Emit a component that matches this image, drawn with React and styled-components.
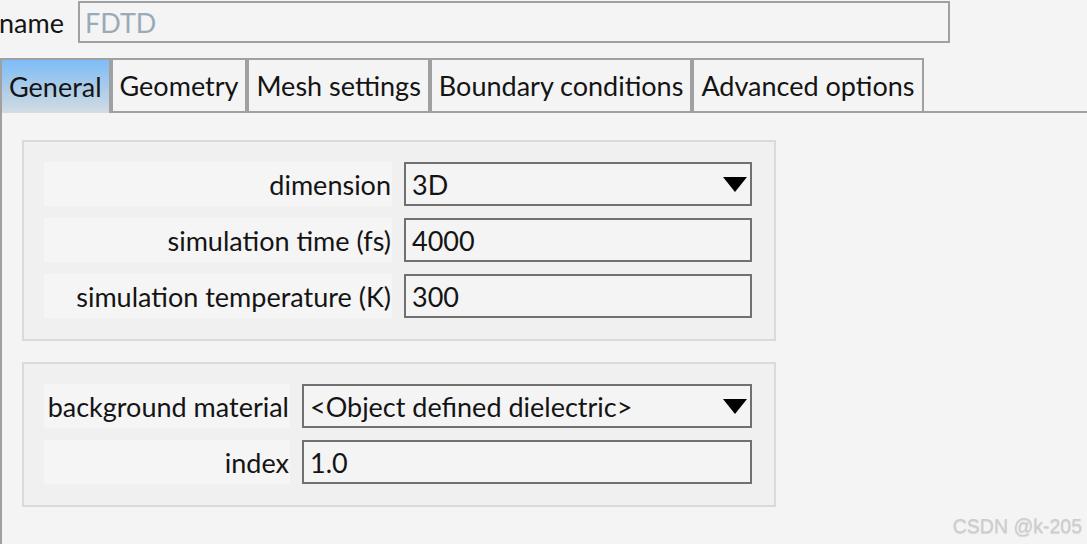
import React from "react";
import styled, { createGlobalStyle } from "styled-components";

const GlobalStyle = createGlobalStyle`
  html, body {
    margin: 0;
    padding: 0;
    background: #f4f4f4;
    overflow: hidden;
  }
  body {
    font-family: Lato, "Noto Sans", sans-serif;
    color: #141414;
  }
`;

const tabs = ["General", "Geometry", "Mesh settings", "Boundary conditions", "Advanced options"];

const DropArrow = () => (
  <svg width="24" height="15" viewBox="0 0 24 15">
    <path d="M0 0 H24 L12 15 Z" fill="#000" />
  </svg>
);

const Field = ({ value, dropdown }) => (
  <Input>
    <span>{value}</span>
    {dropdown && <DropArrow />}
  </Input>
);

const App = () => {
  return (
    <Page>
      <GlobalStyle />
      <NameRow>
        <NameLabel>name</NameLabel>
        <NameInput>FDTD</NameInput>
      </NameRow>

      <TabBar>
        {tabs.map((t, i) => (
          <Tab key={t} active={i === 0}>{t}</Tab>
        ))}
        <TabFill />
      </TabBar>

      <Pane>
        <Group labelWidth="348px">
          <Label>dimension</Label>
          <Field value="3D" dropdown />
          <Label>simulation time (fs)</Label>
          <Field value="4000" />
          <Label>simulation temperature (K)</Label>
          <Field value="300" />
        </Group>

        <Group labelWidth="246px">
          <Label>background material</Label>
          <Field value="<Object defined dielectric>" dropdown />
          <Label>index</Label>
          <Field value="1.0" />
        </Group>
      </Pane>

      <Watermark>CSDN @k-205</Watermark>
    </Page>
  );
};

export default App;

const Page = styled.div`
  position: relative;
  width: 1087px;
  height: 544px;
  overflow: hidden;
`;

const NameRow = styled.div`
  display: flex;
  align-items: center;
  padding-top: 1px;
  height: 42px;
`;

const NameLabel = styled.div`
  width: 79px;
  margin-left: -1px;
  font-size: 27px;
`;

const NameInput = styled.div`
  box-sizing: border-box;
  width: 872px;
  height: 42px;
  border: 2px solid #a0a0a0;
  padding-left: 5px;
  display: flex;
  align-items: center;
  font-size: 27px;
  color: #9aaab6;
`;

const TabBar = styled.div`
  display: flex;
  margin-top: 15px;
  height: 55px;
`;

const Tab = styled.div`
  box-sizing: border-box;
  height: 55px;
  padding: 0 7px;
  display: flex;
  align-items: center;
  font-size: 27px;
  white-space: nowrap;
  border: 2px solid #a0a0a0;
  border-bottom: ${p => (p.active ? "none" : "2px solid #a0a0a0")};
  background: ${p => (p.active ? "linear-gradient(180deg, #7cbdf9 0%, #a9cbe9 50%, #d2dce4 100%)" : "#f4f4f4")};
`;

const TabFill = styled.div`
  flex: 1;
  border-bottom: 2px solid #a0a0a0;
`;

const Pane = styled.div`
  border-left: 2px solid #a0a0a0;
  padding: 27px 0 0 20px;
  display: flex;
  flex-direction: column;
  gap: 21px;
  height: 440px;
`;

const Group = styled.div`
  box-sizing: border-box;
  width: 754px;
  border: 2px solid #dadada;
  background: #f0f0f0;
  padding: 20px 22px 21px 20px;
  display: grid;
  grid-template-columns: ${p => p.labelWidth} 1fr;
  column-gap: 12px;
  row-gap: 12px;
`;

const Label = styled.div`
  height: 44px;
  background: #f5f5f5;
  display: flex;
  align-items: center;
  justify-content: flex-end;
  padding-right: 1px;
  font-size: 27px;
  white-space: nowrap;
`;

const Input = styled.div`
  box-sizing: border-box;
  height: 44px;
  border: 2px solid #707070;
  background: #f4f4f4;
  display: flex;
  align-items: center;
  justify-content: space-between;
  padding: 0 3px 0 6px;
  font-size: 27px;
  white-space: nowrap;
`;

const Watermark = styled.div`
  position: absolute;
  right: 5px;
  bottom: 6px;
  font-family: "Liberation Sans", Arial, sans-serif;
  font-size: 19.5px;
  color: #cdcdcd;
  text-shadow: 0 1px 1px rgba(0, 0, 0, 0.12);
`;
